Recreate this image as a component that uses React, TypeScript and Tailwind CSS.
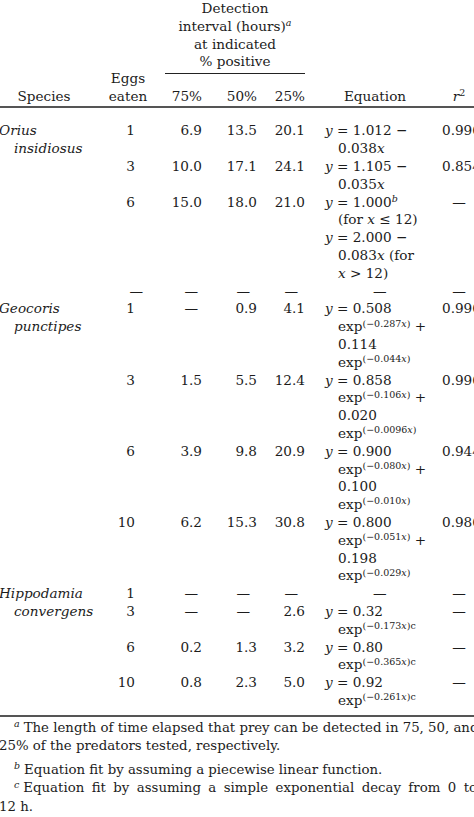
import React from "react";

type EqLine = { t: React.ReactNode; ind?: boolean };
type SpLine = { t: string; ind?: boolean };
type Row = {
  sp?: SpLine[];
  eggs: string;
  a: string;
  b: string;
  c: string;
  eq: EqLine[] | null;
  r2: string;
};

const X = () => <i className="italic">x</i>;
const Y = () => <i className="italic">y</i>;
const Exp = ({ k, c, plus }: { k: string; c?: boolean; plus?: boolean }) => (
  <>
    exp
    <sup className="text-[9.5px]">
      (−{k}
      <i className="italic">x</i>){c ? "c" : ""}
    </sup>
    {plus ? " +" : ""}
  </>
);

const rows: Row[] = [
  {
    sp: [{ t: "Orius" }, { t: "insidiosus", ind: true }],
    eggs: "1",
    a: "6.9",
    b: "13.5",
    c: "20.1",
    eq: [
      { t: <><Y /> = 1.012 −</> },
      { t: <>0.038<X /></>, ind: true },
    ],
    r2: "0.996",
  },
  {
    eggs: "3",
    a: "10.0",
    b: "17.1",
    c: "24.1",
    eq: [
      { t: <><Y /> = 1.105 −</> },
      { t: <>0.035<X /></>, ind: true },
    ],
    r2: "0.854",
  },
  {
    eggs: "6",
    a: "15.0",
    b: "18.0",
    c: "21.0",
    eq: [
      { t: <><Y /> = 1.000<sup className="text-[9.5px] italic">b</sup></> },
      { t: <>(for <X /> ≤ 12)</>, ind: true },
      { t: <><Y /> = 2.000 −</> },
      { t: <>0.083<X /> (for</>, ind: true },
      { t: <><X /> &gt; 12)</>, ind: true },
    ],
    r2: "—",
  },
  { eggs: "—", a: "—", b: "—", c: "—", eq: null, r2: "—" },
  {
    sp: [{ t: "Geocoris" }, { t: "punctipes", ind: true }],
    eggs: "1",
    a: "—",
    b: "0.9",
    c: "4.1",
    eq: [
      { t: <><Y /> = 0.508</> },
      { t: <Exp k="0.287" plus />, ind: true },
      { t: <>0.114</>, ind: true },
      { t: <Exp k="0.044" />, ind: true },
    ],
    r2: "0.996",
  },
  {
    eggs: "3",
    a: "1.5",
    b: "5.5",
    c: "12.4",
    eq: [
      { t: <><Y /> = 0.858</> },
      { t: <Exp k="0.106" plus />, ind: true },
      { t: <>0.020</>, ind: true },
      { t: <Exp k="0.0096" />, ind: true },
    ],
    r2: "0.996",
  },
  {
    eggs: "6",
    a: "3.9",
    b: "9.8",
    c: "20.9",
    eq: [
      { t: <><Y /> = 0.900</> },
      { t: <Exp k="0.080" plus />, ind: true },
      { t: <>0.100</>, ind: true },
      { t: <Exp k="0.010" />, ind: true },
    ],
    r2: "0.944",
  },
  {
    eggs: "10",
    a: "6.2",
    b: "15.3",
    c: "30.8",
    eq: [
      { t: <><Y /> = 0.800</> },
      { t: <Exp k="0.051" plus />, ind: true },
      { t: <>0.198</>, ind: true },
      { t: <Exp k="0.029" />, ind: true },
    ],
    r2: "0.986",
  },
  {
    sp: [{ t: "Hippodamia" }],
    eggs: "1",
    a: "—",
    b: "—",
    c: "—",
    eq: null,
    r2: "—",
  },
  {
    sp: [{ t: "convergens", ind: true }],
    eggs: "3",
    a: "—",
    b: "—",
    c: "2.6",
    eq: [
      { t: <><Y /> = 0.32</> },
      { t: <Exp k="0.173" c />, ind: true },
    ],
    r2: "—",
  },
  {
    eggs: "6",
    a: "0.2",
    b: "1.3",
    c: "3.2",
    eq: [
      { t: <><Y /> = 0.80</> },
      { t: <Exp k="0.365" c />, ind: true },
    ],
    r2: "—",
  },
  {
    eggs: "10",
    a: "0.8",
    b: "2.3",
    c: "5.0",
    eq: [
      { t: <><Y /> = 0.92</> },
      { t: <Exp k="0.261" c />, ind: true },
    ],
    r2: "—",
  },
];

const D = "—";

export default function App() {
  return (
    <div className="w-[474px] h-[817px] overflow-hidden bg-white text-[#1c1c1c] font-['DejaVu_Serif',serif] text-[13.6px] leading-[17.8px]">
      <div className="-ml-px w-[479px]">
        {/* Header */}
        <div className="grid grid-cols-[101px_56px_52px_54px_48px_130px_38px] border-b-2 border-[#555] pb-px">
          <div className="col-start-1 row-start-1 row-span-2 self-end text-center pr-[11px]">Species</div>
          <div className="col-start-2 row-start-1 row-span-2 self-end text-center">
            Eggs
            <br />
            eaten
          </div>
          <div className="col-start-3 col-span-3 row-start-1 ml-[9px] mr-[5px] border-b border-[#222] pb-[1.5px] text-center">
            Detection
            <br />
            interval (hours)<sup className="text-[9.5px] italic">a</sup>
            <br />
            at indicated
            <br />% positive
          </div>
          <div className="col-start-3 row-start-2 pt-[14px] text-right pr-[6px]">75%</div>
          <div className="col-start-4 row-start-2 pt-[14px] text-right pr-[5px]">50%</div>
          <div className="col-start-5 row-start-2 pt-[14px] text-right pr-[5px]">25%</div>
          <div className="col-start-6 row-start-1 row-span-2 self-end text-center">Equation</div>
          <div className="col-start-7 row-start-1 row-span-2 self-end text-center">
            <i className="italic">r</i>
            <sup className="text-[9.5px]">2</sup>
          </div>
        </div>

        {/* Body */}
        <div className="grid grid-cols-[101px_56px_52px_54px_48px_130px_38px] border-b-2 border-[#555] pt-[14px] pb-[5px]">
          {rows.map((r, i) => (
            <React.Fragment key={i}>
              <div className="italic whitespace-nowrap">
                {r.sp
                  ? r.sp.map((s, j) => (
                      <div key={j} className={s.ind ? "pl-[15px]" : ""}>
                        {s.t}
                      </div>
                    ))
                  : null}
              </div>
              <div className={r.eggs === D ? "text-right pr-[13px]" : "text-right pr-[21px]"}>{r.eggs}</div>
              <div className={r.a === D ? "text-right pr-[10px]" : "text-right pr-[6px]"}>{r.a}</div>
              <div className={r.b === D ? "text-right pr-[12px]" : "text-right pr-[5px]"}>{r.b}</div>
              <div className={r.c === D ? "text-right pr-[12px]" : "text-right pr-[5px]"}>{r.c}</div>
              <div className="whitespace-nowrap">
                {r.eq ? (
                  r.eq.map((l, j) => (
                    <div key={j} className={l.ind ? "pl-[28px]" : "pl-[15px]"}>
                      {l.t}
                    </div>
                  ))
                ) : (
                  <div className="pl-[63px]">—</div>
                )}
              </div>
              <div className={r.r2 === D ? "text-center whitespace-nowrap" : "pl-[2px] whitespace-nowrap"}>{r.r2}</div>
            </React.Fragment>
          ))}
        </div>

        {/* Footnotes */}
        <div className="pt-[2px] leading-[18.5px] text-[13.3px]">
          <div className="w-max min-w-[463px] ml-[15px] [text-align-last:justify] text-justify">
            <sup className="text-[9.5px] italic mr-[4px]">a</sup>The length of time elapsed that prey can be detected in 75, 50, and
          </div>
          <div>25% of the predators tested, respectively.</div>
          <div className="mt-[5px] pl-[15px]">
            <sup className="text-[9.5px] italic mr-[4px]">b</sup>Equation fit by assuming a piecewise linear function.
          </div>
          <div className="w-max min-w-[463px] ml-[15px] [text-align-last:justify] text-justify">
            <sup className="text-[9.5px] italic mr-[4px]">c</sup>Equation fit by assuming a simple exponential decay from 0 to
          </div>
          <div>12 h.</div>
        </div>
      </div>
    </div>
  );
}
